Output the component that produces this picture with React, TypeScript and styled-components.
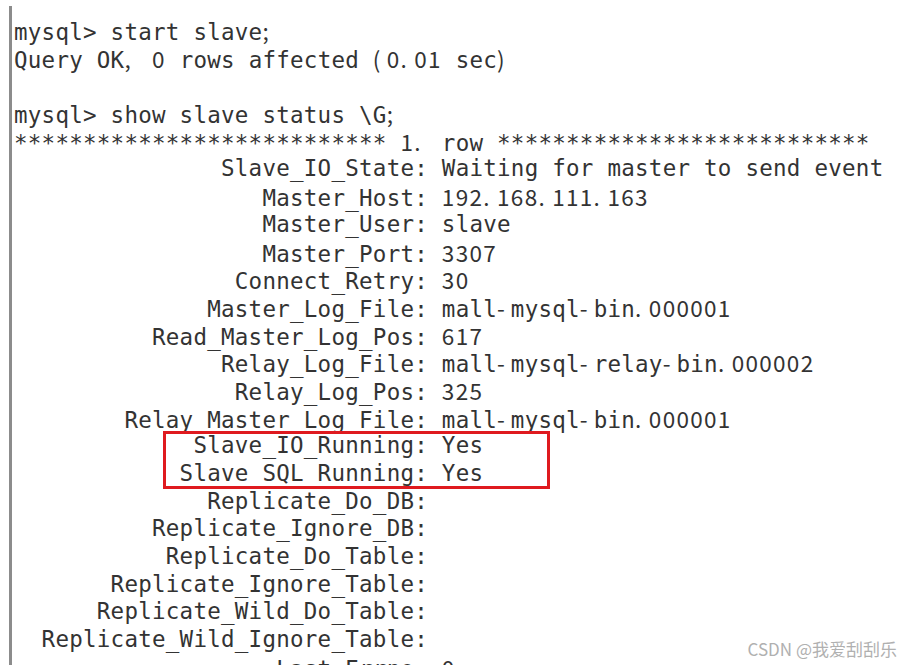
import React from "react";
import styled, { createGlobalStyle } from "styled-components";

const CELL = 13.8;
const LINE = 27.7;
const FONT = 22.5;

const GlobalStyle = createGlobalStyle`
  html, body {
    margin: 0;
    padding: 0;
    background: #ffffff;
    overflow: hidden;
  }
`;

const Page = styled.div`
  position: relative;
  width: 902px;
  height: 665px;
  overflow: hidden;
  background: #ffffff;
  padding: 6px 0 0 9px;
  box-sizing: border-box;
`;

const Terminal = styled.div`
  border-left: 3px solid #8c8c8c;
  height: 100%;
  padding: 11px 0 0 2px;
  box-sizing: border-box;
  color: #333333;
  font-family: "DejaVu Sans Mono", monospace;
  font-size: ${FONT}px;
  letter-spacing: ${CELL - FONT * 0.602}px;
`;

const Line = styled.div`
  height: ${LINE}px;
  line-height: ${LINE}px;
  white-space: pre;
`;

const Cjk = styled.span`
  display: inline-block;
  width: ${CELL}px;
  letter-spacing: 0;
  font-family: "Noto Sans CJK SC", "DejaVu Sans", sans-serif;
  font-size: 22.5px;
  text-align: left;
`;

const Highlight = styled.div`
  position: relative;
  &::after {
    content: "";
    position: absolute;
    left: 149px;
    top: -1px;
    width: 387px;
    height: 58px;
    border: 3px solid #df1a1f;
    box-sizing: border-box;
    pointer-events: none;
  }
`;

const Watermark = styled.div`
  position: absolute;
  right: 5px;
  bottom: 6px;
  font-family: "Noto Sans CJK SC", "Noto Sans", sans-serif;
  font-size: 17px;
  line-height: 20px;
  color: #b0b0b0;
  white-space: nowrap;
`;

const SPECIAL = /[0-9.,()\-;]/;

function renderText(s: string) {
  const out: React.ReactNode[] = [];
  let buf = "";
  let k = 0;
  for (const ch of s) {
    if (SPECIAL.test(ch)) {
      if (buf) {
        out.push(buf);
        buf = "";
      }
      out.push(<Cjk key={k++}>{ch}</Cjk>);
    } else {
      buf += ch;
    }
  }
  if (buf) out.push(buf);
  return out;
}

const TextLine: React.FC<{ text: string }> = ({ text }) => (
  <Line>{text ? renderText(text) : "\u00a0"}</Line>
);

const field = (label: string, value: string) =>
  `${label.padStart(29)}: ${value}`;

const header = [
  "mysql> start slave;",
  "Query OK, 0 rows affected (0.01 sec)",
  "",
  "mysql> show slave status \\G;",
  `${"*".repeat(27)} 1. row ${"*".repeat(27)}`,
];

const before: [string, string][] = [
  ["Slave_IO_State", "Waiting for master to send event"],
  ["Master_Host", "192.168.111.163"],
  ["Master_User", "slave"],
  ["Master_Port", "3307"],
  ["Connect_Retry", "30"],
  ["Master_Log_File", "mall-mysql-bin.000001"],
  ["Read_Master_Log_Pos", "617"],
  ["Relay_Log_File", "mall-mysql-relay-bin.000002"],
  ["Relay_Log_Pos", "325"],
  ["Relay_Master_Log_File", "mall-mysql-bin.000001"],
];

const highlighted: [string, string][] = [
  ["Slave_IO_Running", "Yes"],
  ["Slave_SQL_Running", "Yes"],
];

const after: [string, string][] = [
  ["Replicate_Do_DB", ""],
  ["Replicate_Ignore_DB", ""],
  ["Replicate_Do_Table", ""],
  ["Replicate_Ignore_Table", ""],
  ["Replicate_Wild_Do_Table", ""],
  ["Replicate_Wild_Ignore_Table", ""],
  ["Last_Errno", "0"],
];

export default function App() {
  return (
    <>
      <GlobalStyle />
      <Page>
        <Terminal>
          {header.map((t, i) => (
            <TextLine key={`h${i}`} text={t} />
          ))}
          {before.map(([l, v]) => (
            <TextLine key={l} text={field(l, v)} />
          ))}
          <Highlight>
            {highlighted.map(([l, v]) => (
              <TextLine key={l} text={field(l, v)} />
            ))}
          </Highlight>
          {after.map(([l, v]) => (
            <TextLine key={l} text={field(l, v)} />
          ))}
        </Terminal>
        <Watermark>CSDN @我爱刮刮乐</Watermark>
      </Page>
    </>
  );
}
